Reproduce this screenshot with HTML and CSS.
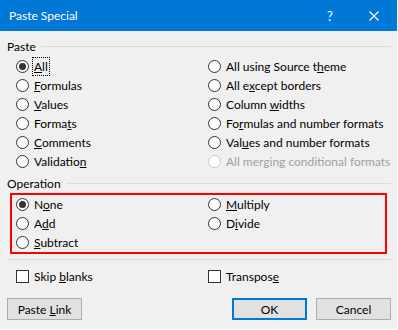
FILE: index.html
```html
<!DOCTYPE html>
<html lang="en">
<head>
  <meta charset="UTF-8">
  <title>Paste Special</title>
  <link rel="stylesheet" href="styles.css">
</head>
<body>

  <div class="dialog">
    <div class="titlebar">
      <span class="title">Paste Special</span>
      <span class="help">?</span>
      <span class="close">
        <svg width="10" height="10" viewBox="0 0 10 10"><path d="M0.5 0.5L9.5 9.5M9.5 0.5L0.5 9.5" stroke="#fff" stroke-width="1.1"/></svg>
      </span>
    </div>

    <div class="content">
      <div class="group-head"><span>Paste</span><i class="rule"></i></div>

      <div class="options">
        <label class="opt"><span class="radio on"></span><span class="focus"><u>A</u>ll</span></label>
        <label class="opt"><span class="radio"></span><span>All using Source t<u>h</u>eme</span></label>
        <label class="opt"><span class="radio"></span><span><u>F</u>ormulas</span></label>
        <label class="opt"><span class="radio"></span><span>All e<u>x</u>cept borders</span></label>
        <label class="opt"><span class="radio"></span><span><u>V</u>alues</span></label>
        <label class="opt"><span class="radio"></span><span>Column <u>w</u>idths</span></label>
        <label class="opt"><span class="radio"></span><span>Forma<u>t</u>s</span></label>
        <label class="opt"><span class="radio"></span><span>Fo<u>r</u>mulas and number formats</span></label>
        <label class="opt"><span class="radio"></span><span><u>C</u>omments</span></label>
        <label class="opt"><span class="radio"></span><span>Val<u>u</u>es and number formats</span></label>
        <label class="opt"><span class="radio"></span><span>Validatio<u>n</u></span></label>
        <label class="opt disabled"><span class="radio"></span><span>All merging conditional formats</span></label>
      </div>

      <div class="group-head op-head"><span>Operation</span><i class="rule"></i></div>

      <div class="options op-box">
        <label class="opt"><span class="radio on"></span><span>N<u>o</u>ne</span></label>
        <label class="opt"><span class="radio"></span><span><u>M</u>ultiply</span></label>
        <label class="opt"><span class="radio"></span><span>A<u>d</u>d</span></label>
        <label class="opt"><span class="radio"></span><span>D<u>i</u>vide</span></label>
        <label class="opt"><span class="radio"></span><span><u>S</u>ubtract</span></label>
      </div>

      <div class="rule full"></div>

      <div class="options checks">
        <label class="opt"><span class="box"></span><span>Skip <u>b</u>lanks</span></label>
        <label class="opt"><span class="box"></span><span>Transpos<u>e</u></span></label>
      </div>

      <div class="buttons">
        <button>Paste <u>L</u>ink</button>
        <span class="spacer"></span>
        <button class="default">OK</button>
        <button>Cancel</button>
      </div>
    </div>
  </div>

</body>
</html>
```

FILE: styles.css
```css
body {
  margin: 0;
  background: #fff;
  font-family: Lato, "Noto Sans", sans-serif;
  font-size: 12px;
  color: #000;
}

.dialog {
  width: 397px;
  height: 329px;
  background-color: #f0f0f0;
}

.titlebar {
  height: 31px;
  background-color: #0078d7;
  color: #fff;
  display: flex;
  align-items: center;
}

.title {
  padding-left: 9px;
  flex: 1;
}

.help {
  font-size: 13px;
  width: 14px;
  text-align: center;
  margin-right: 32px;
}

.close {
  display: flex;
  margin-right: 18px;
}

.content {
  padding: 0 6px 0 7px;
}

.group-head {
  display: flex;
  align-items: center;
  height: 16px;
  margin-top: 7px;
}

.group-head .rule {
  flex: 1;
  margin-left: 5px;
}

.op-head {
  margin-top: 4px;
}

.rule {
  height: 1px;
  background-color: #dadada;
}

.rule.full {
  margin-top: 5px;
}

.options {
  display: grid;
  grid-template-columns: 192px 1fr;
  grid-auto-rows: 19px;
  padding-left: 9px;
  margin-top: 3px;
}

.opt {
  display: flex;
  align-items: center;
  white-space: nowrap;
}

.radio {
  width: 11px;
  height: 11px;
  border: 1px solid #333;
  border-radius: 50%;
  background: #fff;
  margin-right: 5px;
  position: relative;
  flex: none;
}

.radio.on::after {
  content: "";
  position: absolute;
  left: 2px;
  top: 2px;
  width: 7px;
  height: 7px;
  border-radius: 50%;
  background: #333;
}

.disabled {
  color: #a0a0a0;
}

.disabled .radio {
  border-color: #c8c8c8;
}

.focus {
  outline: 1px dotted #000;
  outline-offset: 1px;
}

.op-box {
  margin-top: 2px;
  margin-left: 3px;
  width: 369px;
  padding-left: 4px;
  border: 2px solid #f00;
}

.checks {
  margin-top: 7px;
}

.box {
  width: 11px;
  height: 11px;
  border: 1px solid #333;
  background: #fff;
  margin-right: 5px;
  flex: none;
}

.buttons {
  display: flex;
  gap: 9px;
  margin-top: 12px;
}

.spacer {
  flex: 1;
}

button {
  width: 75px;
  height: 22px;
  padding: 0;
  background-color: #e1e1e1;
  border: 1px solid #adadad;
  font-family: inherit;
  font-size: 12px;
  color: #000;
}

button.default {
  border: 2px solid #0078d7;
}
```
